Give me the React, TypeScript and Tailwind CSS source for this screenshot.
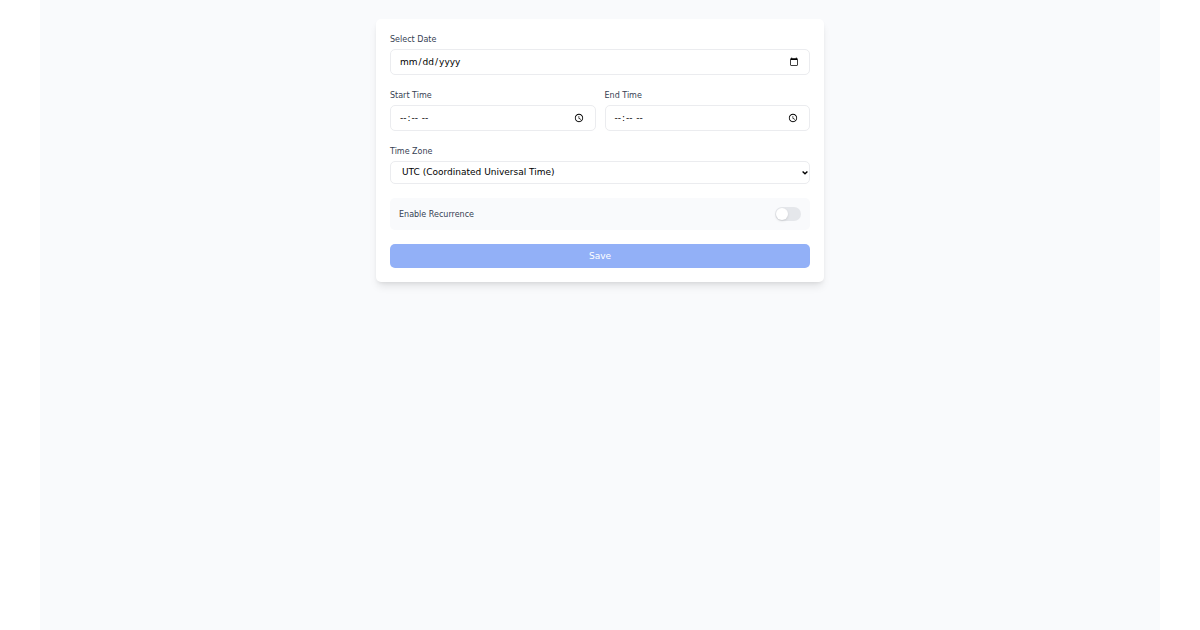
import { useState } from 'react';

const timeZones = [
  { value: 'UTC', label: 'UTC (Coordinated Universal Time)' },
  { value: 'EST', label: 'EST (Eastern Standard Time)' },
  { value: 'CST', label: 'CST (Central Standard Time)' },
  { value: 'PST', label: 'PST (Pacific Standard Time)' },
];

const labelClass = 'block pt-px mb-[3px] text-[8px] leading-[12px] font-medium text-gray-700';
const inputClass =
  'block w-full h-[26px] px-2 pt-px text-[9px] text-black bg-white border border-[#ebecef] rounded-[5px] focus:outline-none focus:ring-1 focus:ring-blue-500 [&::-webkit-calendar-picker-indicator]:size-[10px] [&::-webkit-calendar-picker-indicator]:mb-[2px]';

interface FieldProps {
  id: string;
  label: string;
  type: string;
  value: string;
  onChange: (value: string) => void;
}

function Field({ id, label, type, value, onChange }: FieldProps) {
  return (
    <div>
      <label htmlFor={id} className={labelClass}>
        {label}
      </label>
      <input
        id={id}
        type={type}
        value={value}
        onChange={(e) => onChange(e.target.value)}
        className={inputClass}
      />
    </div>
  );
}

export default function App() {
  const [date, setDate] = useState('');
  const [startTime, setStartTime] = useState('');
  const [endTime, setEndTime] = useState('');
  const [timeZone, setTimeZone] = useState('UTC');
  const [recurring, setRecurring] = useState(false);

  const canSave = date !== '' && startTime !== '' && endTime !== '';

  return (
    <div className="min-h-screen bg-white font-['DejaVu_Sans',sans-serif]">
      <main className="min-h-screen max-w-[1120px] mx-auto px-4 pt-[19px] bg-[#f9fafc]">
        <form
          onSubmit={(e) => e.preventDefault()}
          className="max-w-md mx-auto p-[14px] flex flex-col gap-[14px] bg-white rounded-[5px] shadow-[0_6px_9px_-2px_rgb(0_0_0/0.1),0_2px_4px_-2px_rgb(0_0_0/0.1)]"
        >
          <Field id="date" label="Select Date" type="date" value={date} onChange={setDate} />

          <div className="grid grid-cols-2 gap-[9px]">
            <Field id="start" label="Start Time" type="time" value={startTime} onChange={setStartTime} />
            <Field id="end" label="End Time" type="time" value={endTime} onChange={setEndTime} />
          </div>

          <div>
            <label htmlFor="timezone" className={labelClass}>
              Time Zone
            </label>
            <div className="relative">
              <select
                id="timezone"
                value={timeZone}
                onChange={(e) => setTimeZone(e.target.value)}
                className="appearance-none block w-full h-[23px] px-[11px] text-[9px] text-black bg-white border border-[#ebecef] rounded-[5px] focus:outline-none focus:ring-1 focus:ring-blue-500"
              >
                {timeZones.map((zone) => (
                  <option key={zone.value} value={zone.value}>
                    {zone.label}
                  </option>
                ))}
              </select>
              <svg
                className="absolute inset-y-0 right-[2px] my-auto w-[6px] h-1 pointer-events-none"
                viewBox="0 0 6 4"
                fill="none"
                stroke="black"
                strokeWidth={1.4}
              >
                <path d="M0.6 0.5L3 2.7L5.4 0.5" />
              </svg>
            </div>
          </div>

          <div className="flex items-center justify-between h-8 px-[9px] bg-[#f9fafc] rounded-[5px]">
            <label htmlFor="recurrence" className="pt-px text-[8px] leading-[12px] font-medium text-gray-700">
              Enable Recurrence
            </label>
            <input
              id="recurrence"
              type="checkbox"
              role="switch"
              checked={recurring}
              onChange={(e) => setRecurring(e.target.checked)}
              className="appearance-none w-[26px] h-[14px] p-px rounded-full bg-gray-200 checked:bg-blue-600 cursor-pointer before:block before:size-3 before:rounded-full before:bg-white before:shadow-sm checked:before:ml-3"
            />
          </div>

          <button
            type="submit"
            disabled={!canSave}
            className="w-full h-6 pt-px text-[9px] font-medium text-white bg-blue-600 rounded-[5px] hover:bg-blue-700 disabled:bg-[#92b0f7]"
          >
            Save
          </button>
        </form>
      </main>
    </div>
  );
}
